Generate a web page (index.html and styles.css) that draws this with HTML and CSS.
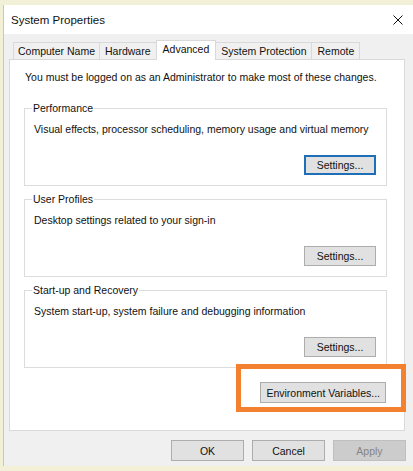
FILE: index.html
```html
<!DOCTYPE html>
<html lang="en">
<head>
  <meta charset="UTF-8" />
  <title>System Properties</title>
  <link rel="stylesheet" href="styles.css">
</head>
<body>
  <div class="dialog">
    <div class="titlebar">
      <span class="title">System Properties</span>
      <svg class="close" width="10" height="10" viewBox="0 0 10 10">
        <path d="M0.5 0.5 L9.5 9.5 M9.5 0.5 L0.5 9.5" stroke="#111" stroke-width="1" fill="none"/>
      </svg>
    </div>

    <div class="content">
      <div class="tabs">
        <div class="tab">Computer Name</div>
        <div class="tab">Hardware</div>
        <div class="tab active">Advanced</div>
        <div class="tab">System Protection</div>
        <div class="tab">Remote</div>
      </div>

      <div class="panel">
        <p class="intro">You must be logged on as an Administrator to make most of these changes.</p>

        <fieldset class="group">
          <legend>Performance</legend>
          <p class="desc">Visual effects, processor scheduling, memory usage and virtual memory</p>
          <div class="group-actions">
            <button class="btn focused">Settings...</button>
          </div>
        </fieldset>

        <fieldset class="group">
          <legend>User Profiles</legend>
          <p class="desc">Desktop settings related to your sign-in</p>
          <div class="group-actions">
            <button class="btn">Settings...</button>
          </div>
        </fieldset>

        <fieldset class="group">
          <legend>Start-up and Recovery</legend>
          <p class="desc">System start-up, system failure and debugging information</p>
          <div class="group-actions">
            <button class="btn">Settings...</button>
          </div>
        </fieldset>

        <div class="env-row">
          <div class="env-wrap">
            <button class="btn">Environment Variables...</button>
            <div class="highlight"></div>
          </div>
        </div>
      </div>

      <div class="footer">
        <button class="btn">OK</button>
        <button class="btn">Cancel</button>
        <button class="btn disabled">Apply</button>
      </div>
    </div>
  </div>
</body>
</html>
```

FILE: styles.css
```css
:root {
  --fondo: #f2f0d6;
  --gris: #f0f0f0;
  --borde: #d9d9d9;
  --naranja: #f4812f;
}

body {
  margin: 0;
  background-color: var(--fondo);
  font-family: "Liberation Sans", Arial, sans-serif;
  font-size: 10.5px;
  line-height: 15px;
  color: #111;
  overflow: hidden;
}

.dialog {
  margin: 5px 0 0 3px;
  height: 461px;
  border-left: 1px solid #c9c8b4;
  background-color: var(--gris);
  display: flex;
  flex-direction: column;
}

.titlebar {
  flex-shrink: 0;
  height: 29px;
  background-color: white;
  display: flex;
  align-items: center;
  justify-content: space-between;
  padding: 0 10px 0 7px;
}

.title {
  font-size: 11.5px;
  margin-top: 1px;
}

.content {
  flex: 1;
  padding: 5px 8px 0 5px;
  display: flex;
  flex-direction: column;
}

.tabs {
  display: flex;
  align-items: flex-end;
  margin-left: 5px;
  height: 20px;
}

.tab {
  padding: 0 5px;
  height: 16px;
  line-height: 17px;
  border: 1px solid var(--borde);
  border-bottom: none;
  margin-left: -1px;
  background-color: var(--gris);
}

.tab:first-child {
  padding: 0 4px;
}

.tab.active {
  height: 19px;
  line-height: 17px;
  padding: 0 6px;
  background-color: white;
  margin-bottom: -1px;
  position: relative;
  z-index: 1;
}

.panel {
  background-color: white;
  border: 1px solid var(--borde);
  padding: 10px 17px 27px 14px;
}

.intro {
  margin: 0 0 16px 1px;
}

.group {
  border: 1px solid #dcdcdc;
  margin: 0 0 6px 0;
  padding: 0 10px 10px 9px;
}

.group legend {
  padding: 0 1px;
  margin-left: -2px;
}

.desc {
  margin: 6px 0 0 0;
}

.group-actions {
  display: flex;
  justify-content: flex-end;
  margin-top: 18px;
}

.btn {
  font-family: "Liberation Sans", Arial, sans-serif;
  font-size: 10.5px;
  color: #111;
  height: 20px;
  min-width: 72px;
  padding: 0 7px;
  background-color: #e1e1e1;
  border: 1px solid #adadad;
  border-radius: 0;
}

.btn.focused {
  border: 2px solid #1f6fb8;
}

.btn.disabled {
  background-color: #cccccc;
  border-color: #bfbfbf;
  color: #858585;
}

.env-row {
  display: flex;
  justify-content: flex-end;
  margin-top: 14px;
  padding-right: 1px;
}

.env-wrap {
  position: relative;
}

.env-wrap .btn {
  height: 21px;
  padding: 0 5px;
}

.highlight {
  position: absolute;
  left: -24px;
  right: -20px;
  top: -18px;
  bottom: -9px;
  border: 5px solid var(--naranja);
}

.footer {
  display: flex;
  justify-content: flex-end;
  gap: 8px;
  margin-top: 9px;
  margin-right: -1px;
}

.footer .btn {
  height: 21px;
  width: 73px;
}
```
